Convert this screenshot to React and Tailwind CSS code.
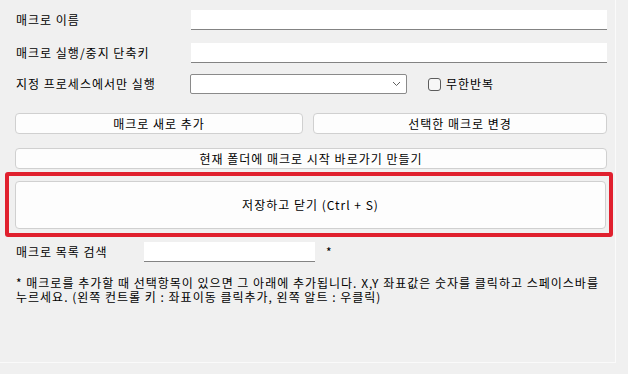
import React from "react";

const font = { fontFamily: '"Noto Sans CJK KR", "Noto Sans", sans-serif' };

const TextBox = ({ className = "" }) => (
  <div className={`h-[20px] bg-white border-b border-[#838383] ${className}`} />
);

const Btn = ({ children, className = "" }) => (
  <div
    className={`flex items-center justify-center bg-[#fdfdfd] border border-[#d0d0d0] rounded-[4px] text-[12px] tracking-[1px] text-black ${className}`}
  >
    {children}
  </div>
);

export default function App() {
  return (
    <div className="w-[628px] h-[374px] bg-[#f0f0f0] overflow-hidden" style={font}>
      <div className="w-[616px] h-[363px] border-r border-b border-[#fafafa] relative">
        <div className="pt-[10px]">
          {/* name */}
          <div className="flex items-center h-[20px]">
            <span className="ml-[16px] w-[175px] text-[12px] tracking-[1px] text-black">매크로 이름</span>
            <TextBox className="w-[416px]" />
          </div>
          {/* hotkey */}
          <div className="flex items-center h-[20px] mt-[13px]">
            <span className="ml-[16px] w-[175px] text-[12px] tracking-[1px] text-black">매크로 실행/중지 단축키</span>
            <TextBox className="w-[416px]" />
          </div>
          {/* process */}
          <div className="flex items-center h-[20px] mt-[11px]">
            <span className="ml-[16px] w-[174px] text-[12px] tracking-[1px] text-black">지정 프로세스에서만 실행</span>
            <div className="w-[217px] h-[20px] bg-white border border-[#8a8a8a] rounded-[2px] flex items-center justify-end pr-[5px]">
              <svg width="9" height="6" viewBox="0 0 9 6" fill="none">
                <path d="M1 1l3.5 3.5L8 1" stroke="#606060" strokeWidth="1" />
              </svg>
            </div>
            <div className="ml-[21px] w-[13px] h-[13px] border border-[#5c5c5c] rounded-[3px] bg-[#f7f7f7]" />
            <span className="ml-[5px] text-[12px] tracking-[1px] text-black">무한반복</span>
          </div>
          {/* add / change */}
          <div className="flex mt-[19px] ml-[15px] gap-[10px] h-[21px]">
            <Btn className="w-[288px]">매크로 새로 추가</Btn>
            <Btn className="w-[294px]">선택한 매크로 변경</Btn>
          </div>
          <div className="flex mt-[14px] ml-[15px] h-[21px]">
            <Btn className="w-[592px]">현재 폴더에 매크로 시작 바로가기 만들기</Btn>
          </div>
          {/* save */}
          <div className="ml-[5px] mt-[3px] w-[608px] h-[65px] border-[4px] border-[#e0202e] rounded-[3px] pl-[6px] pt-[5px]">
            <Btn className="w-[591px] h-[48px]">저장하고 닫기 (Ctrl + S)</Btn>
          </div>
          {/* search */}
          <div className="flex items-center h-[20px] mt-[5px]">
            <span className="ml-[16px] w-[128px] text-[12px] tracking-[1px] text-black">매크로 목록 검색</span>
            <TextBox className="w-[171px]" />
            <span className="ml-[11px] text-[12px] text-black">*</span>
          </div>
          <div className="ml-[16px] mt-[14px] w-[600px] text-[12px] leading-[14px] tracking-[1px] text-black whitespace-nowrap">
            <div>* 매크로를 추가할 때 선택항목이 있으면 그 아래에 추가됩니다. X,Y 좌표값은 숫자를 클릭하고 스페이스바를</div>
            <div>누르세요. (왼쪽 컨트롤 키 : 좌표이동 클릭추가, 왼쪽 알트 : 우클릭)</div>
          </div>
        </div>
      </div>
    </div>
  );
}
